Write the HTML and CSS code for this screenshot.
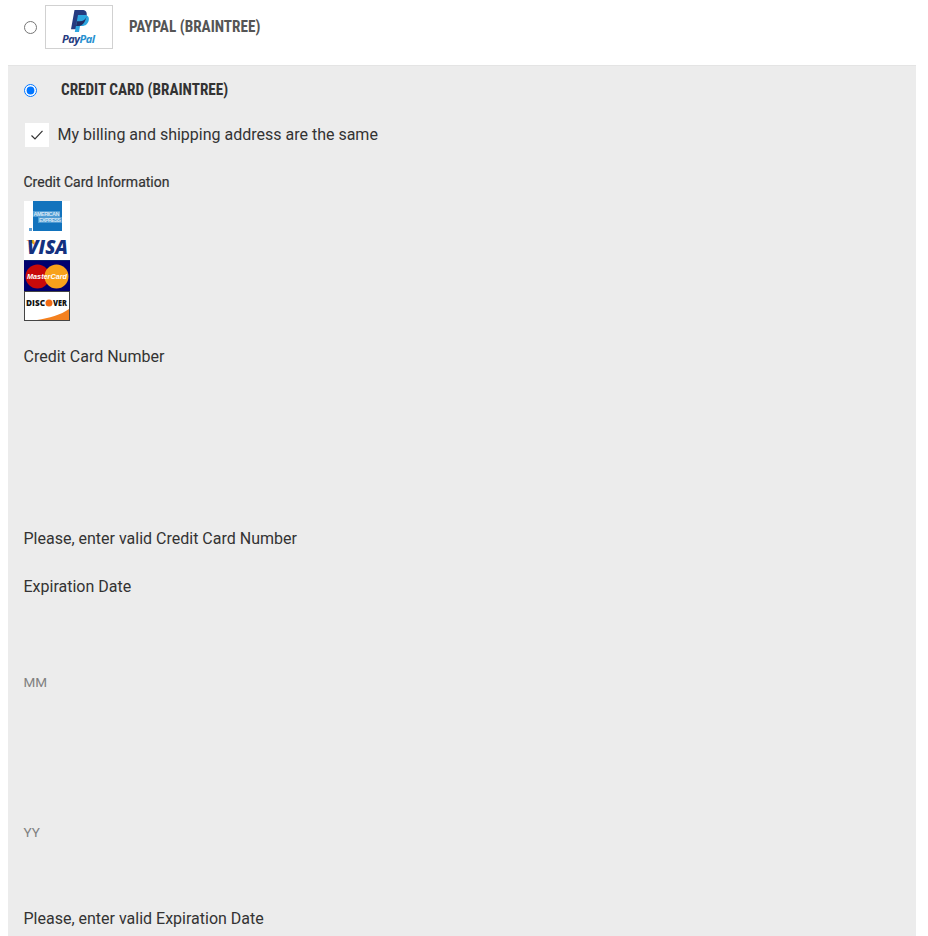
FILE: index.html
```html
<!DOCTYPE html>
<html lang="en">
<head>
<meta charset="utf-8">
<title>Payment</title>
<link rel="stylesheet" href="styles.css">
</head>
<body>
<div class="methods">
  <div class="method-row paypal-row">
    <input class="radio" type="radio" name="pay">
    <span class="paypal-logo">
      <svg width="66" height="42" viewBox="0 0 66 42">
        <path d="M28.500 4h7.500c3.400 0 5.200 1.900 4.700 5c-.7 4.200-3.400 6.300-7.200 6.300h-2.300l-1.300 8h-4.900z" fill="#253b80"/>
        <path d="M32 9h6.500c.9 0 1.700.1 2.300.4c1.700.8 2.400 2.400 2 4.600c-.7 3.900-3.300 6-6.900 6h-1.900l-1 6h-4.200z" fill="#2ea7e0"/>
        <path d="M30.800 15.300h2.900c3.500 0 5.900-1.700 6.900-5c-.9 4.200-3.400 9.700-7.600 9.700h-3z" fill="#222d65"/>
        <text class="pp-text" x="16" y="37" textLength="33"><tspan fill="#253b80">Pay</tspan><tspan fill="#2790d0">Pal</tspan></text>
      </svg>
    </span>
    <span class="method-title muted">PAYPAL (BRAINTREE)</span>
  </div>
  <section class="panel">
    <div class="method-row cc-row">
      <input class="radio" type="radio" name="pay" checked>
      <span class="method-title">CREDIT CARD (BRAINTREE)</span>
    </div>
    <div class="billing">
      <span class="check">
        <svg width="14" height="12" viewBox="0 0 14 12"><path d="M1.500 6.500L5 10L12.500 1.800" fill="none" stroke="#333" stroke-width="1.200"/></svg>
      </span>
      <span class="text">My billing and shipping address are the same</span>
    </div>
    <div class="cc-heading">Credit Card Information</div>
    <div class="cards">
      <svg class="card" width="46" height="30" viewBox="0 0 46 30">
        <rect width="46" height="30" fill="#fff"/>
        <rect x="9" y="0" width="29" height="30" fill="#1273bd"/>
        <rect x="9" y="10" width="27" height="6" fill="#4f9bd3"/>
        <rect x="14" y="16" width="24" height="6" fill="#4f9bd3"/>
        <text class="amex" x="9.500" y="15" textLength="26">AMERICAN</text>
        <text class="amex" x="15" y="21" textLength="22">EXPRESS</text>
        <rect x="5" y="27" width="3" height="3" fill="#5f9fd2"/>
      </svg>
      <svg class="card" width="46" height="30" viewBox="0 0 46 30">
        <rect width="46" height="30" fill="#fff"/>
        <path d="M2 9h8l2 7C10 13 6 10.500 2 9z" fill="#f2a81d"/>
        <text class="visa" x="3" y="23" textLength="41" lengthAdjust="spacingAndGlyphs">VISA</text>
        <rect y="29" width="46" height="1" fill="#0a1f6f"/>
      </svg>
      <svg class="card" width="46" height="30" viewBox="0 0 46 30">
        <rect width="46" height="30" fill="#00006e"/>
        <circle cx="13.500" cy="15.500" r="12" fill="#c80a0a"/>
        <circle cx="32.500" cy="15.500" r="12" fill="#f7a21b"/>
        <text class="mc" x="3" y="18" textLength="40" lengthAdjust="spacingAndGlyphs">MasterCard</text>
      </svg>
      <svg class="card" width="46" height="30" viewBox="0 0 46 30">
        <rect x=".5" y=".5" width="45" height="29" fill="#fff" stroke="#444"/>
        <path d="M45 18V29H13C25 27 37 24 45 18z" fill="#f48120"/>
        <text class="disc" x="2" y="15" textLength="19" lengthAdjust="spacingAndGlyphs">DISC</text>
        <circle cx="25" cy="12" r="3.500" fill="#f06a14"/>
        <text class="disc" x="29" y="15" textLength="14" lengthAdjust="spacingAndGlyphs">VER</text>
      </svg>
    </div>
    <div class="text cc-number">Credit Card Number</div>
    <div class="text cc-error">Please, enter valid Credit Card Number</div>
    <div class="text exp-label">Expiration Date</div>
    <div class="small mm">MM</div>
    <div class="small yy">YY</div>
    <div class="text exp-error">Please, enter valid Expiration Date</div>
  </section>
</div>
</body>
</html>
```
FILE: styles.css
```css
html, body { margin: 0; padding: 0; height: 936px; overflow: hidden; background: #fff; }
body { font-family: Roboto, "Liberation Sans", sans-serif; color: #333; }
.methods { padding: 0 12px 0 8px; }
.method-row { display: flex; align-items: center; }
.paypal-row { height: 65px; padding: 5px 0 16px 16px; box-sizing: border-box; }
.radio { width: 13px; height: 13px; margin: 0; flex: none; }
.paypal-logo { width: 68px; height: 44px; box-sizing: border-box; border: 1px solid #d1d1d1; background: #fff; margin-left: 8px; display: block; }
.paypal-logo svg { display: block; }
.pp-text { font: italic 700 11px "Open Sans", sans-serif; }
.method-title { font-size: 16px; font-weight: 700; font-stretch: condensed; line-height: 20px; color: #333; transform: scaleX(.95); transform-origin: left; white-space: nowrap; }
.muted { color: #555; margin-left: 16px; }
.panel { background: #ececec; border-top: 1px solid #e4e4e4; height: 871px; box-sizing: border-box; padding: 0 16px 0 15.500px; }
.panel .radio { margin-left: .5px; }
.cc-row { height: 48px; }
.cc-row .method-title { margin-left: 24px; }
.billing { display: flex; align-items: center; height: 24px; margin-top: 9px; margin-bottom: 1px; }
.check { width: 24px; height: 24px; background: #fff; display: flex; align-items: center; justify-content: center; margin: 0 8.500px 0 1.500px; }
.text { font-size: 16px; line-height: 24px; color: #333; }
.cc-heading { font-size: 14px; font-weight: 400; line-height: 20px; margin-top: 25px; color: #333; -webkit-text-stroke: .2px #333; }
.cards { display: flex; flex-direction: column; margin-top: 9px; align-items: flex-start; padding-left: .5px; }
.card { display: block; }
.amex { font: 700 5.500px "Liberation Sans", sans-serif; fill: #d4e7f5; }
.visa { font: italic 800 20px "Open Sans", sans-serif; fill: #14317f; }
.mc { font: italic 700 8px "Liberation Sans", sans-serif; fill: #fff; }
.disc { font: 800 9px "Open Sans", sans-serif; fill: #111; }
.cc-number { margin-top: 24px; }
.cc-error { margin-top: 158px; }
.exp-label { margin-top: 24px; }
.small { font-size: 13.500px; line-height: 20px; color: #808080; }
.mm { margin-top: 73px; }
.yy { margin-top: 130px; }
.exp-error { margin-top: 65px; }
```
